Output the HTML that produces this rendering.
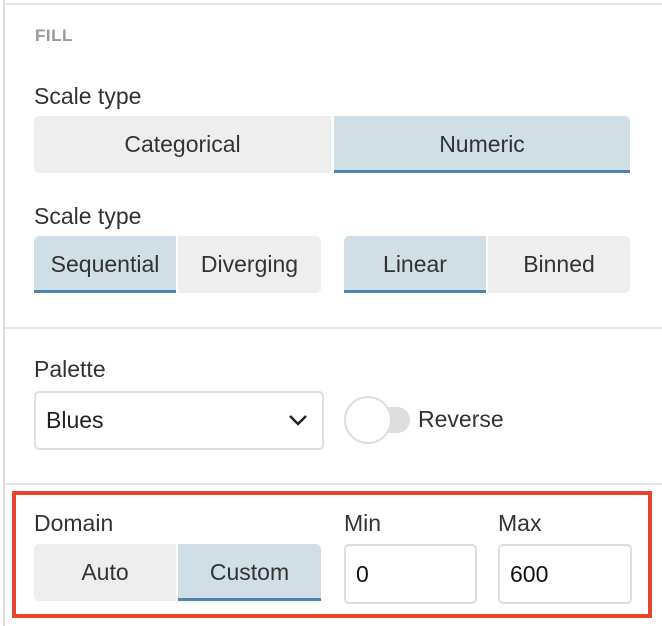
<!DOCTYPE html>
<html><head><style>
body{margin:0;width:662px;height:626px;background:#fff;font-family:"Liberation Sans",sans-serif;color:#333;position:relative;overflow:hidden}
.a{position:absolute}
.btn{position:absolute;background:#eee;display:flex;align-items:center;justify-content:center;font-size:23px;box-sizing:border-box}
.sel{background:#d0dee6;box-shadow:inset 0 -3px 0 #4a86b4}
.lbl{position:absolute;font-size:23px}
.inp{position:absolute;border:2px solid #ddd;border-radius:5px;box-sizing:border-box;font-size:23px;display:flex;align-items:center;padding-left:10px;color:#111}
</style></head><body>
<div class="a" style="left:3px;top:0;width:2px;height:626px;background:#ddd"></div>
<div class="a" style="left:3px;top:3px;width:659px;height:2px;background:#e6e6e6"></div>
<div class="a" style="left:35px;top:26px;font-size:17px;font-weight:bold;color:#999;letter-spacing:0.5px">FILL</div>
<div class="lbl" style="left:34px;top:83px">Scale type</div>
<div class="btn" style="left:34px;top:116px;width:297px;height:57px;border-radius:5px 0 0 5px">Categorical</div>
<div class="btn sel" style="left:334px;top:116px;width:296px;height:57px;border-radius:0 5px 0 0">Numeric</div>
<div class="lbl" style="left:34px;top:203px">Scale type</div>
<div class="btn sel" style="left:34px;top:236px;width:142px;height:57px;border-radius:5px 0 0 0">Sequential</div>
<div class="btn" style="left:178px;top:236px;width:143px;height:57px;border-radius:0 5px 5px 0">Diverging</div>
<div class="btn sel" style="left:344px;top:236px;width:142px;height:57px;border-radius:5px 0 0 0">Linear</div>
<div class="btn" style="left:488px;top:236px;width:142px;height:57px;border-radius:0 5px 5px 0">Binned</div>
<div class="a" style="left:5px;top:327px;width:657px;height:2px;background:#e6e6e6"></div>
<div class="lbl" style="left:34px;top:356px">Palette</div>
<div class="inp" style="left:34px;top:391px;width:290px;height:59px;color:#222">Blues
<svg class="a" style="left:252px;top:20px" width="20" height="14" viewBox="0 0 20 14"><path d="M2 3l8 8 8-8" fill="none" stroke="#222" stroke-width="2.5"/></svg></div>
<div class="a" style="left:355px;top:407px;width:55px;height:26px;border-radius:13px;background:#ddd"></div>
<div class="a" style="left:344px;top:396px;width:44px;height:44px;border-radius:50%;background:#fff;border:2px solid #ddd"></div>
<div class="lbl" style="left:418px;top:406px">Reverse</div>
<div class="a" style="left:5px;top:483px;width:657px;height:2px;background:#e6e6e6"></div>
<div class="a" style="left:12px;top:491px;width:640px;height:127px;box-sizing:border-box;border:4px solid #e8432d"></div>
<div class="lbl" style="left:34px;top:510px">Domain</div>
<div class="lbl" style="left:344px;top:510px">Min</div>
<div class="lbl" style="left:498px;top:510px">Max</div>
<div class="btn" style="left:34px;top:544px;width:142px;height:57px;border-radius:5px 0 0 5px">Auto</div>
<div class="btn sel" style="left:178px;top:544px;width:143px;height:57px;border-radius:0 5px 0 0">Custom</div>
<div class="inp" style="left:344px;top:544px;width:133px;height:60px">0</div>
<div class="inp" style="left:498px;top:544px;width:134px;height:60px">600</div>
</body></html>
